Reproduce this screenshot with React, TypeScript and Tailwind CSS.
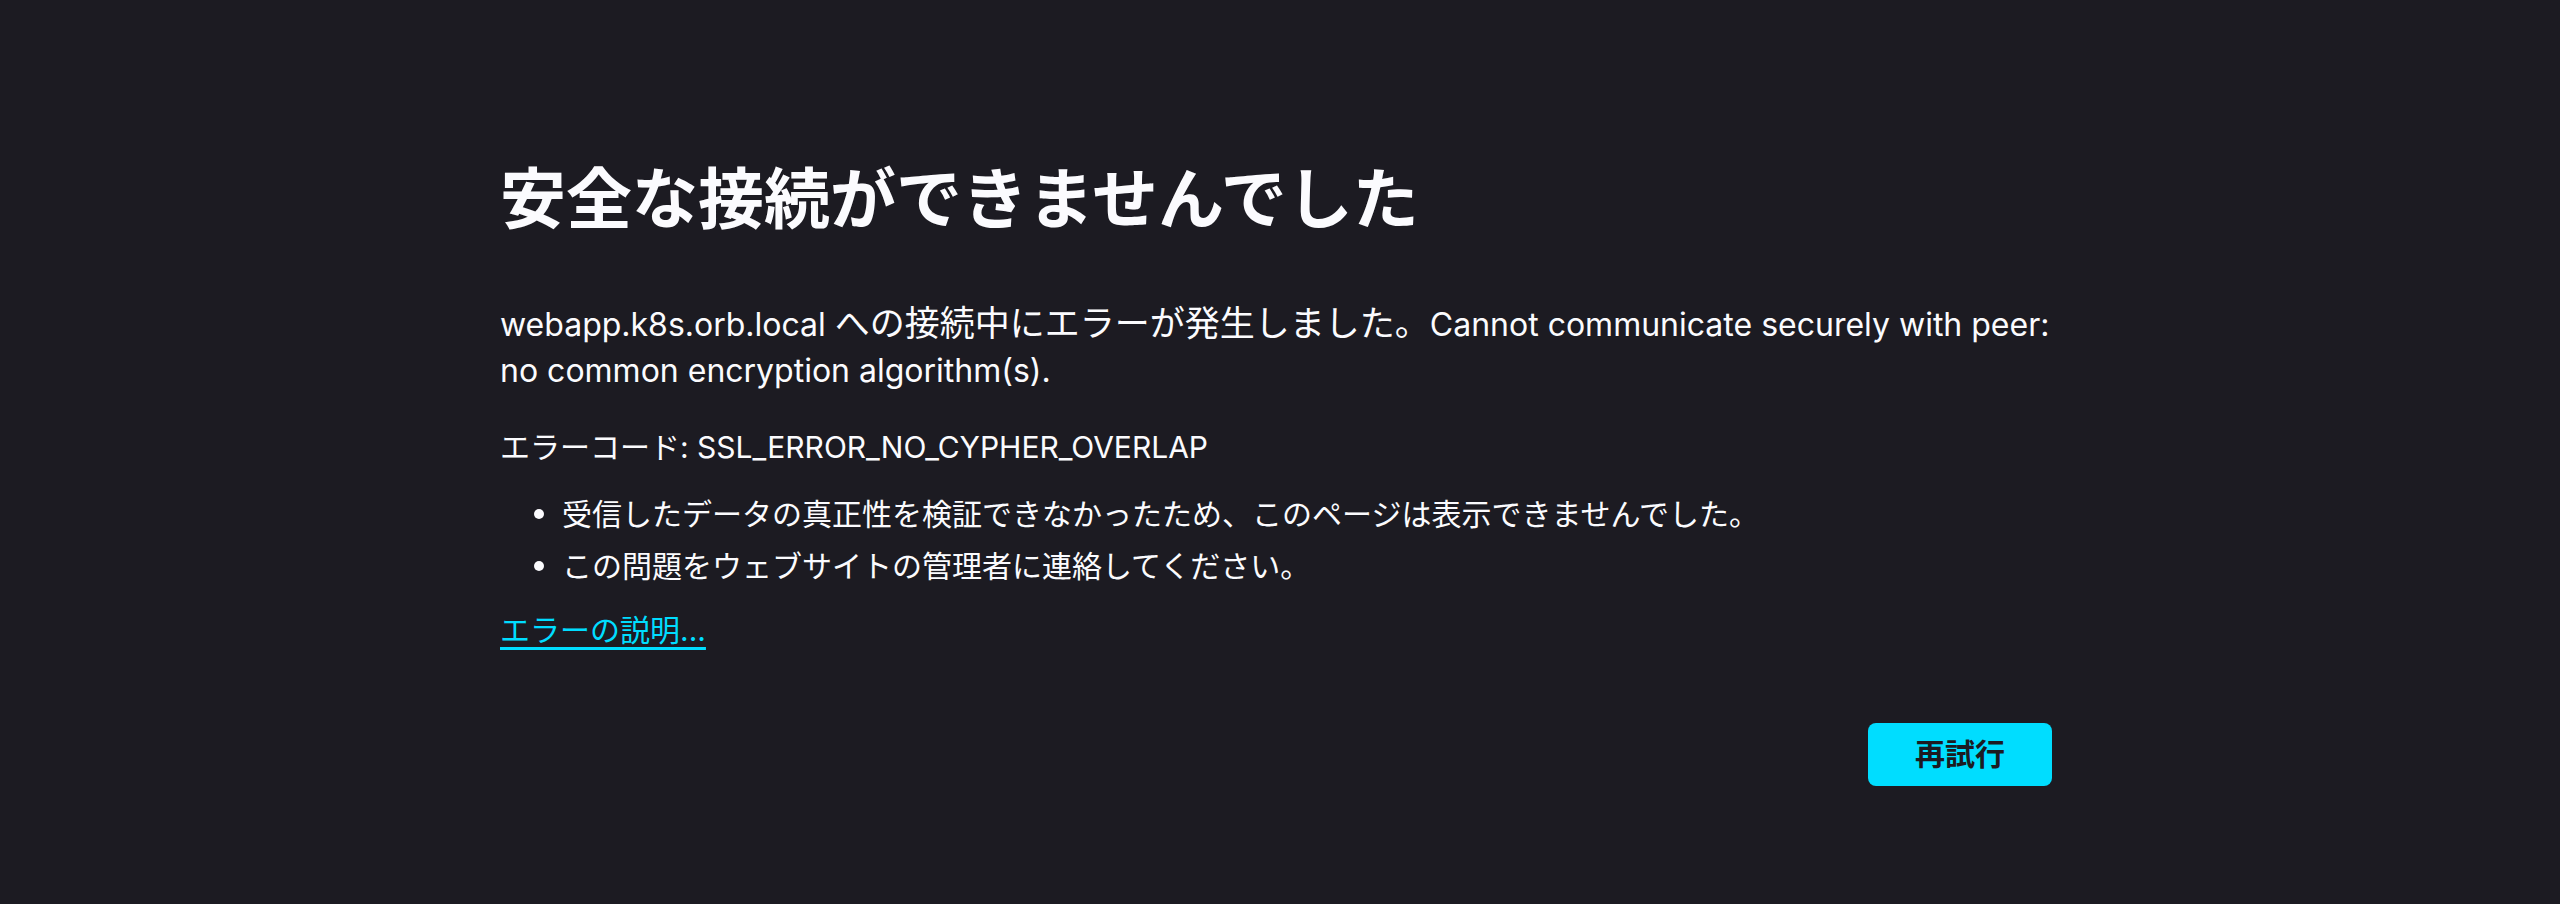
export default function App() {
  return (
    <div
      className="min-h-[904px] w-full bg-[#1c1b22] text-[#fbfbfe]"
      style={{ fontFamily: 'Inter, "Noto Sans CJK JP", sans-serif' }}
    >
      <div className="mx-auto w-[1560px] pt-[154px]">
        {/* Title */}
        <h1 className="text-[66px] font-bold leading-[80px] tracking-normal [font-family:'Noto_Sans_CJK_JP',sans-serif]">
          安全な接続ができませんでした
        </h1>

        {/* Short description */}
        <p className="mt-[68px] text-[32px] leading-[46px]">
          webapp.k8s.orb.local <span className="text-[35px] leading-none">への接続中にエラーが発生しました。</span>Cannot communicate securely with peer:
          <br />
          no common encryption algorithm(s).
        </p>

        <p className="mt-[33px] text-[30px] leading-[40px]">
          エラーコード: SSL_ERROR_NO_CYPHER_OVERLAP
        </p>

        <ul className="mt-[27px] flex flex-col gap-[12px] text-[30px] leading-[40px]">
          <li className="flex items-center">
            <span className="ml-[34px] mr-[18px] h-[10px] w-[10px] rounded-full bg-[#fbfbfe]" />
            受信したデータの真正性を検証できなかったため、このページは表示できませんでした。
          </li>
          <li className="flex items-center">
            <span className="ml-[34px] mr-[18px] h-[10px] w-[10px] rounded-full bg-[#fbfbfe]" />
            この問題をウェブサイトの管理者に連絡してください。
          </li>
        </ul>

        <a
          href="#"
          className="mt-[24px] inline-block text-[30px] leading-[40px] text-[#00ddff] underline decoration-[3px] underline-offset-[6px]"
        >
          エラーの説明...
        </a>

        {/* Actions */}
        <div className="mt-[73px] flex justify-end">
          <button className="mr-[8px] flex h-[63px] w-[184px] items-center justify-center rounded-[8px] bg-[#00ddff] text-[30px] font-bold text-[#1c1b22]">
            再試行
          </button>
        </div>
      </div>
    </div>
  );
}
